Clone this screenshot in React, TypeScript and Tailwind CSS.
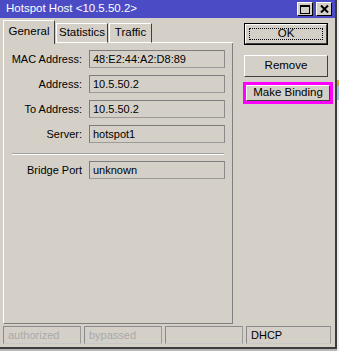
const font = { fontFamily: '"Liberation Sans", Arial, sans-serif' };

function Field({ label, value }: { label: string; value: string }) {
  return (
    <div className="flex items-center h-[18px]">
      <div className="w-[79px] text-right text-[11px] text-black pr-[1px]">{label}</div>
      <div className="ml-[6px] w-[136px] h-[18px] flex items-center pl-[3px] text-[11px] text-black border border-t-[#7c7c7c] border-l-[#7c7c7c] border-r-[#8a8a8a] border-b-[#9a9a9a]">
        {value}
      </div>
    </div>
  );
}

function WinButton({ children, focused }: { children: React.ReactNode; focused?: boolean }) {
  return (
    <div className={`h-full w-full ${focused ? 'border border-black' : ''}`}>
      <div className="h-full w-full border border-t-white border-l-white border-r-[#404040] border-b-[#404040] flex items-center justify-center">
        <div className={`flex items-center justify-center text-[11.5px] text-black ${focused ? 'border border-dotted border-black w-[calc(100%-6px)] h-[calc(100%-6px)]' : ''}`}>
          {children}
        </div>
      </div>
    </div>
  );
}

function StatusCell({ text, dim, w }: { text: string; dim?: boolean; w: string }) {
  return (
    <div className={`${w} h-[18px] flex items-center pl-[4px] text-[11px] border border-t-[#8a8a8a] border-l-[#8a8a8a] border-r-[#9a9a9a] border-b-[#c8c8c8] ${dim ? 'text-[#a9a9a9]' : 'text-black'}`}>
      {text}
    </div>
  );
}

export default function App() {
  return (
    <div className="w-[339px] h-[351px] bg-[#b8b8b8] flex" style={font}>
      <div className="w-[337px] h-[349px] border-r-2 border-b-2 border-[#3c3c3c] bg-[#d4d0c8] flex flex-col">
        {/* Title bar */}
        <div className="h-[18px] bg-[#4b4bc6] flex items-center pl-[6px] pr-[3px]">
          <span className="text-white text-[11.5px] flex-1">Hotspot Host &lt;10.5.50.2&gt;</span>
          <div className="w-[16px] h-[14px] bg-[#d4d0c8] border border-t-white border-l-white border-r-black border-b-black flex items-center justify-center">
            <svg width="10" height="9" viewBox="0 0 10 9">
              <rect x="0.5" y="0.5" width="9" height="8" fill="none" stroke="#000" />
              <line x1="0" y1="1.5" x2="10" y2="1.5" stroke="#000" />
            </svg>
          </div>
          <div className="ml-[3px] w-[16px] h-[14px] bg-[#d4d0c8] border border-t-white border-l-white border-r-black border-b-black flex items-center justify-center">
            <svg width="9" height="8" viewBox="0 0 9 8">
              <path d="M1 0.5 L8 7.5 M8 0.5 L1 7.5" stroke="#000" strokeWidth="2" />
            </svg>
          </div>
        </div>

        {/* Main area */}
        <div className="flex h-[308px]">
          <div className="ml-[3px] w-[230px] flex flex-col pt-[1px]">
            {/* Tabs */}
            <div className="flex items-end h-[24px]">
              <div className="w-[52px] h-[24px] bg-[#d4d0c8] border-t border-l border-white border-r border-r-[#404040] flex items-center justify-center text-[11.5px] text-black pb-[2px] -mb-[1px] relative z-10">
                General
              </div>
              <div className="w-[52px] h-[20px] border-t border-l border-white border-r border-r-[#404040] border-b border-b-white flex items-center justify-center text-[11.5px] text-black ml-[1px]">
                Statistics
              </div>
              <div className="w-[43px] h-[20px] border-t border-l border-white border-r border-r-[#404040] border-b border-b-white flex items-center justify-center text-[11.5px] text-black ml-[1px]">
                Traffic
              </div>
              <div className="flex-1 border-b border-white" />
            </div>
            {/* Panel */}
            <div className="h-[281px] border-l border-white border-r border-r-[#808080] border-b border-b-[#808080] flex flex-col pt-[7px]">
              <div className="flex flex-col gap-[7px]">
                <Field label="MAC Address:" value="48:E2:44:A2:D8:89" />
                <Field label="Address:" value="10.5.50.2" />
                <Field label="To Address:" value="10.5.50.2" />
                <Field label="Server:" value="hotspot1" />
              </div>
              <div className="ml-[8px] w-[212px] mt-[10px] border-t border-[#a0a0a0] border-b border-b-white" />
              <div className="mt-[6px]">
                <Field label="Bridge Port" value="unknown" />
              </div>
            </div>
          </div>

          {/* Buttons */}
          <div className="ml-[11px] w-[84px] flex flex-col pt-[5px]">
            <div className="h-[22px]">
              <WinButton focused>OK</WinButton>
            </div>
            <div className="h-[22px] mt-[10px]">
              <WinButton>Remove</WinButton>
            </div>
            <div className="h-[22px] mt-[5px] -ml-[1px] w-[90px] border-[3px] border-[#ff00ff]">
              <WinButton>Make Binding</WinButton>
            </div>
          </div>
        </div>

        {/* Status bar */}
        <div className="flex gap-[3px] ml-[3px] mt-[0px]">
          <StatusCell w="w-[78px]" text="authorized" dim />
          <StatusCell w="w-[78px]" text="bypassed" dim />
          <StatusCell w="w-[78px]" text="" />
          <StatusCell w="w-[85px]" text="DHCP" />
        </div>
      </div>
      <div className="flex-1 flex flex-col bg-[#ececec]">
        <div className="h-[80px]" />
        <div className="h-[6px] bg-[#d8a040]" />
        <div className="h-[14px] bg-[#9cc4ec]" />
      </div>
    </div>
  );
}
